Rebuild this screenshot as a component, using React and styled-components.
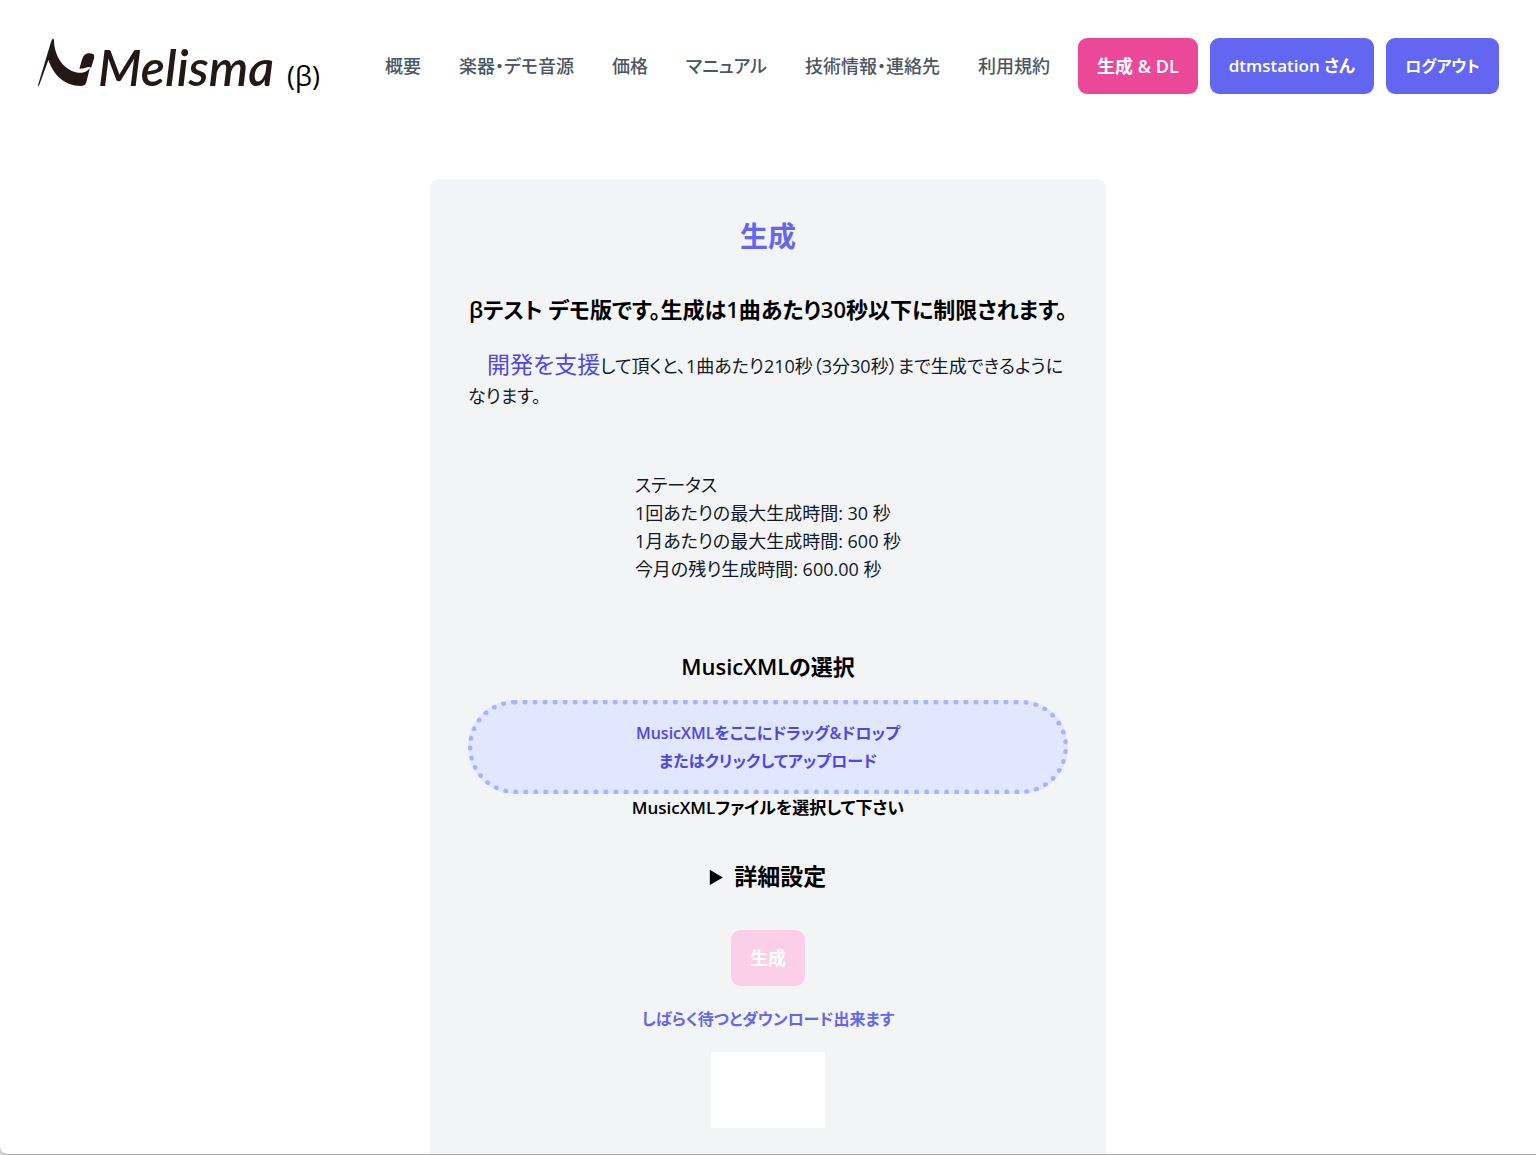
import React, { useState } from "react";
import styled, { createGlobalStyle } from "styled-components";

const GlobalStyle = createGlobalStyle`
  :root {
    --indigo: #6366f1;
    --indigo-dark: #4f46e5;
    --pink: #ec4899;
    --panel: #f3f4f6;
    --text: #111827;
  }

  * {
    box-sizing: border-box;
  }

  body {
    margin: 0;
    background: #d4d4d4;
    font-family: "Open Sans", "Noto Sans CJK JP", sans-serif;
    font-feature-settings: "palt";
    font-size: 18px;
    line-height: 28px;
    color: #000;
  }

  h1, h2, p {
    margin: 0;
  }
`;

const Page = styled.div`
  height: 100vh;
  overflow: hidden;
  background: #fff;
  border-bottom: 1px solid #aaa;
  border-bottom-left-radius: 8px;
`;

const Header = styled.header`
  display: flex;
  align-items: flex-start;
  justify-content: space-between;
  padding: 38px 37px 0;
`;

const Brand = styled.a`
  display: flex;
  align-items: flex-end;
  gap: 10px;
  height: 60px;
  color: #000;
  text-decoration: none;
  font-size: 27px;
  font-weight: 500;
  line-height: 44px;
`;

const Logo = styled.svg`
  width: 240px;
  height: 60px;
  overflow: visible;
  fill: #231815;
  font-family: Lato, sans-serif;
  font-size: 50px;
  font-style: italic;
  font-weight: 600;
`;

const Nav = styled.nav`
  display: flex;
  align-items: center;
  gap: 12px;
`;

const NavLinks = styled.div`
  display: flex;
  gap: 38px;
  margin-right: 16px;
`;

const NavLink = styled.a`
  color: #4b5563;
  font-weight: 500;
  text-decoration: none;
`;

const Button = styled.button`
  height: 56px;
  padding: 0 19px;
  border: 0;
  border-radius: 9px;
  background: ${(props) => (props.$pink ? "var(--pink)" : "var(--indigo)")};
  color: #fff;
  font: inherit;
  font-feature-settings: inherit;
  font-size: ${(props) => props.$size || 18}px;
  font-weight: 600;
  cursor: pointer;

  &:disabled {
    background: #fbcfe8;
    cursor: default;
  }
`;

const Panel = styled.main`
  display: flex;
  flex-direction: column;
  align-items: center;
  max-width: 676px;
  margin: 81px auto 0;
  padding: 38px 38px 76px;
  border-radius: 9px;
  background: var(--panel);
`;

const Title = styled.h1`
  color: var(--indigo);
  font-size: 28px;
  font-weight: 600;
  line-height: 38px;
`;

const Heading = styled.h2`
  margin-top: ${(props) => props.$top}px;
  font-size: 22px;
  font-weight: 600;
  line-height: 32px;
`;

const Support = styled.p`
  align-self: stretch;
  margin-top: 24px;
  color: var(--text);
  line-height: 30px;
  text-indent: 19px;

  a {
    color: var(--indigo-dark);
    font-size: 23px;
    text-decoration: none;
  }
`;

const Status = styled.div`
  margin-top: 60px;
  color: var(--text);
`;

const DropZone = styled.label`
  align-self: stretch;
  margin-top: 18px;
  padding: 14px;
  border: 5px dotted #a5b4fc;
  border-radius: 48px;
  background: #e0e7ff;
  color: var(--indigo-dark);
  font-size: 16px;
  font-weight: 600;
  text-align: center;
  cursor: pointer;
`;

const HiddenFile = styled.input`
  position: absolute;
  width: 1px;
  height: 1px;
  opacity: 0;
`;

const Note = styled.p`
  color: ${(props) => (props.$indigo ? "var(--indigo)" : "#000")};
  font-size: ${(props) => (props.$indigo ? 16 : 17)}px;
  font-weight: 600;
`;

const Details = styled.details`
  margin: 38px 0;

  summary {
    font-size: 23px;
    font-weight: 600;
    line-height: 32px;
    cursor: pointer;
  }
`;

const Preview = styled.div`
  width: 114px;
  height: 76px;
  background: #fff;
`;

const Result = styled.section`
  display: flex;
  flex-direction: column;
  align-items: center;
  gap: 19px;
`;

const links = [
  "概要",
  "楽器・デモ音源",
  "価格",
  "マニュアル",
  "技術情報・連絡先",
  "利用規約",
];

const App = () => {
  const [file, setFile] = useState(null);

  return (
    <>
      <GlobalStyle />
      <Page lang="ja">
        <Header>
          <Brand href="#">
            <Logo viewBox="0 0 240 60" role="img" aria-label="Melisma">
              <path d="M0.8 47.8 14 4Q15.8 -2 17 2C17 15 24 31 40 34.6C46 35.6 51 33.4 53 29.5L49.4 44Q48.4 48 44 48C27 48 16 36 11.4 22L2 47.8Z" />
              <path d="M42.4 30.6 45.2 21C46.6 15.5 51.5 14 56.6 16.2Q57.8 18 57 20.6L54 30C52.6 27 47 31 42.4 30.6Z" />
              <text x="61" y="48">
                Melisma
              </text>
            </Logo>
            (β)
          </Brand>
          <Nav>
            <NavLinks>
              {links.map((label) => (
                <NavLink href="#" key={label}>
                  {label}
                </NavLink>
              ))}
            </NavLinks>
            <Button type="button" $pink>
              生成 &amp; DL
            </Button>
            <Button type="button" $size={17}>
              dtmstation さん
            </Button>
            <Button type="button" $size={16}>
              ログアウト
            </Button>
          </Nav>
        </Header>
        <Panel>
          <Title>生成</Title>
          <Heading $top={38}>
            βテスト デモ版です。生成は1曲あたり30秒以下に制限されます。
          </Heading>
          <Support>
            <a href="#">開発を支援</a>
            して頂くと、1曲あたり210秒（3分30秒）まで生成できるようになります。
          </Support>
          <Status>
            <div>ステータス</div>
            <div>1回あたりの最大生成時間: 30 秒</div>
            <div>1月あたりの最大生成時間: 600 秒</div>
            <div>今月の残り生成時間: 600.00 秒</div>
          </Status>
          <Heading $top={67}>MusicXMLの選択</Heading>
          <DropZone>
            MusicXMLをここにドラッグ&amp;ドロップ
            <br />
            またはクリックしてアップロード
            <HiddenFile
              type="file"
              accept=".xml,.musicxml"
              onChange={(e) => setFile(e.target.files[0])}
            />
          </DropZone>
          <Note>{file ? file.name : "MusicXMLファイルを選択して下さい"}</Note>
          <Details>
            <summary>詳細設定</summary>
          </Details>
          <Result>
            <Button type="button" $pink disabled={!file}>
              生成
            </Button>
            <Note $indigo>しばらく待つとダウンロード出来ます</Note>
            <Preview />
          </Result>
        </Panel>
      </Page>
    </>
  );
};

export default App;
